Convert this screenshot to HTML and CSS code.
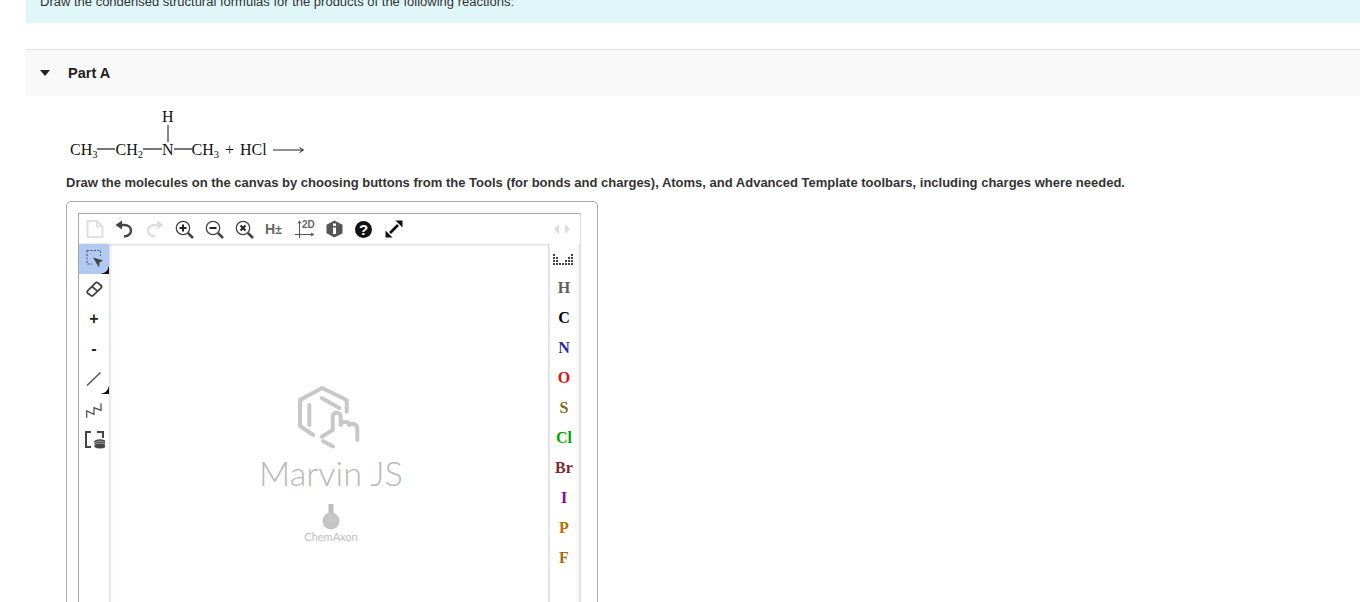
FILE: index.html
```html
<!DOCTYPE html>
<html lang="en">
<head>
<meta charset="utf-8">
<title>Part A</title>
<link rel="stylesheet" href="styles.css">
</head>
<body>
<div class="page">
  <div class="banner"><p class="banner-text">Draw the condensed structural formulas for the products of the following reactions:</p></div>
  <section class="part">
    <header class="part-head"><span class="caret"></span><h2 class="part-title">Part A</h2></header>
    <div class="formula">
      <span>CH<sub>3</sub></span><span class="bond"></span><span>CH<sub>2</sub></span><span class="bond bond-n"></span>
      <span class="stack"><span>H</span><span class="vbond"></span><span>N</span></span>
      <span class="bond"></span><span>CH<sub>3</sub></span><span class="plus">+</span><span>HCl</span>
      <svg class="arrow" width="31" height="8" viewBox="0 0 31 8"><path d="M0 4H30M26.500 1.500L30.500 4L26.500 6.500" fill="none" stroke="#222" stroke-width="1"/></svg>
    </div>
    <p class="instruction">Draw the molecules on the canvas by choosing buttons from the Tools (for bonds and charges), Atoms, and Advanced Template toolbars, including charges where needed.</p>
    <div class="outer">
      <div class="editor">
        <div class="topbar">
          <svg class="t t-doc" width="18" height="18" viewBox="0 0 18 18"><path d="M1.500 1H11L16.500 6.500V17H1.500ZM11 1V6.500H16.500" fill="none" stroke="#e0e0e0" stroke-width="2"/></svg>
          <svg class="t t-undo" width="18" height="18" viewBox="0 0 18 18"><path d="M4 5H9C13.500 5 16 7.500 16 10.500C16 14 13.500 16 9 16.500" fill="none" stroke="#444" stroke-width="2.400"/><path d="M7 0.500L0.500 5L7 9.500Z" fill="#444"/></svg>
          <svg class="t t-redo" width="18" height="18" viewBox="0 0 18 18"><path d="M14 5H9C4.500 5 2 7.500 2 10.500C2 14 4.500 16 9 16.500" fill="none" stroke="#ddd" stroke-width="2.400"/><path d="M11 0.500L17.500 5L11 9.500Z" fill="#ddd"/></svg>
          <svg class="t t-zoom" width="19" height="19" viewBox="0 0 19 19"><circle cx="8" cy="8" r="6.700" fill="none" stroke="#444" stroke-width="1.300"/><path d="M4.500 8H11.500M8 4.500V11.500" stroke="#222" stroke-width="2"/><path d="M13 13L18 18" stroke="#444" stroke-width="2.500"/></svg>
          <svg class="t t-zoom" width="19" height="19" viewBox="0 0 19 19"><circle cx="8" cy="8" r="6.700" fill="none" stroke="#444" stroke-width="1.300"/><path d="M4.500 8H11.500" stroke="#222" stroke-width="2"/><path d="M13 13L18 18" stroke="#444" stroke-width="2.500"/></svg>
          <svg class="t t-zoom" width="19" height="19" viewBox="0 0 19 19"><circle cx="8" cy="8" r="6.700" fill="none" stroke="#444" stroke-width="1.300"/><path d="M5.500 5.500L10.500 10.500M10.500 5.500L5.500 10.500" stroke="#222" stroke-width="2"/><path d="M13 13L18 18" stroke="#444" stroke-width="2.500"/></svg>
          <span class="t t-h">H<span class="pm">±</span></span>
          <span class="t t-2d"><svg width="19" height="19" viewBox="0 0 19 19"><path d="M4.500 2V18M0 14.500H18M3 3.500L4.500 1L6 3.500M16 13L18.500 14.500L16 16" fill="none" stroke="#555" stroke-width="1"/></svg><span class="two-d">2D</span></span>
          <svg class="t t-info" width="17" height="18" viewBox="0 0 17 18"><path d="M8.500 0.500L16.500 4.800V13.200L8.500 17.500L0.500 13.200V4.800Z" fill="#555"/><rect x="7" y="3.500" width="3" height="2.500" fill="#fff"/><rect x="7" y="7.500" width="3" height="6.500" fill="#fff"/></svg>
          <span class="t t-help">?</span>
          <svg class="t t-exp" width="18" height="18" viewBox="0 0 18 18"><path d="M5 13L13 5" stroke="#111" stroke-width="2.600"/><path d="M10.500 0.500H17.500V7.500ZM0.500 10.500V17.500H7.500Z" fill="#111"/></svg>
          <svg class="t-scroll" width="18" height="10" viewBox="0 0 18 10"><path d="M6 0V10L1 5ZM12 0V10L17 5Z" fill="#ddd"/></svg>
        </div>
        <div class="body-row">
          <div class="leftbar">
            <div class="lb lb-sel corner">
              <svg width="20" height="20" viewBox="0 0 20 20"><path d="M3 1.500H16.500V7M3 1.500V15H8" fill="none" stroke="#444" stroke-width=".9" stroke-dasharray="2 1.500"/><path d="M9 8.500L19 11.500L15.500 13.500L15 18.500Z" fill="#444"/></svg>
            </div>
            <div class="lb"><svg width="17" height="16" viewBox="0 0 20 19"><path d="M2 11.500L11 2.500C12 1.500 13.500 1.500 14.500 2.500L17.500 5C18.500 6 18.500 7.500 17.500 8.500L8.500 17C7.500 18 6.500 18 5.500 17L2 14.500C1 13.500 1 12.500 2 11.500ZM7 6.500L13.500 12" fill="none" stroke="#444" stroke-width="2.200"/></svg></div>
            <div class="lb lb-charge">+</div>
            <div class="lb lb-charge">-</div>
            <div class="lb corner"><svg width="18" height="18" viewBox="0 0 18 18"><path d="M2 15.500L15.500 2.500" stroke="#555" stroke-width="1.500"/></svg></div>
            <div class="lb"><svg class="chain" width="18" height="18" viewBox="0 0 18 18"><path d="M1.700 16.700V10L9 13.300V6.700L16 9.300V2.300" fill="none" stroke="#444" stroke-width="1.200"/></svg></div>
            <div class="lb"><svg width="22" height="20" viewBox="0 0 22 20"><path d="M8 3H3V18H8M14 3H20V9" fill="none" stroke="#444" stroke-width="2"/><ellipse cx="17" cy="13" rx="6" ry="2.800" fill="#444"/><ellipse cx="17" cy="15" rx="6" ry="2.800" fill="#444" stroke="#fff" stroke-width=".5"/><ellipse cx="17" cy="17" rx="6" ry="2.800" fill="#444" stroke="#fff" stroke-width=".5"/></svg></div>
          </div>
          <div class="canvas">
            <svg class="logo" width="65" height="65" viewBox="0 0 65 65" fill="none" stroke="#c8c8c8" stroke-width="4" stroke-linejoin="round" stroke-linecap="round">
              <path d="M49.700 26.700V15L25 3L3 15V41L16.300 50M36 61.500L26 56"/>
              <path d="M12.300 20V40M24.700 13L42.300 23"/>
              <path d="M24.700 51.700L35.700 45V31.700C35.700 26.500 43.700 26.500 43.700 31.700V40M43.700 40C44 36 52 36 52.300 40M52.300 40C53 37.500 60.300 38.500 60.300 44V55"/>
            </svg>
            <div class="marvin">Marvin JS</div>
            <svg class="flask" width="18" height="26" viewBox="0 0 18 26"><rect x="6.500" y="0" width="5" height="10" fill="#bdbdbd"/><circle cx="9" cy="17" r="8.500" fill="#c4c4c4"/><circle cx="9" cy="17" r="5" fill="none" stroke="#dcdcdc" stroke-width="1" stroke-dasharray="1 2"/><circle cx="9" cy="17" r="2" fill="none" stroke="#dcdcdc" stroke-width="1" stroke-dasharray="1 1.500"/></svg>
            <div class="chemaxon">ChemAxon</div>
          </div>
          <div class="rightbar">
            <svg class="pt" width="22" height="14" viewBox="0 0 22 14" fill="#444"><path d="M0 1h2v2H0zM0 4h2v2H0zM0 7h2v2H0zM0 10h2v2H0zM3 4h2v2H3zM3 7h2v2H3zM3 10h2v2H3zM6 10h2v2H6zM9 10h2v2H9zM12 7h2v2h-2zM12 10h2v2h-2zM15 4h2v2h-2zM15 7h2v2h-2zM15 10h2v2h-2zM18 1h2v2h-2zM18 4h2v2h-2zM18 7h2v2h-2zM18 10h2v2h-2z"/></svg>
            <div class="atom a-h">H</div>
            <div class="atom a-c">C</div>
            <div class="atom a-n">N</div>
            <div class="atom a-o">O</div>
            <div class="atom a-s">S</div>
            <div class="atom a-cl">Cl</div>
            <div class="atom a-br">Br</div>
            <div class="atom a-i">I</div>
            <div class="atom a-p">P</div>
            <div class="atom a-f">F</div>
          </div>
        </div>
      </div>
    </div>
  </section>
</div>
</body>
</html>
```

FILE: styles.css
```css
html, body { margin: 0; padding: 0; background: #fff; }
.page {
  height: 602px;
  overflow: hidden;
  padding-left: 26px;
  font-family: "Liberation Sans", Arial, sans-serif;
  color: #222;
}
.banner { height: 23px; background: #e0f7fa; overflow: hidden; }
.banner-text { margin: -7px 0 0 14px; font-size: 13px; line-height: 18px; color: #333; }
.part { margin-top: 26px; }
.part-head {
  display: flex;
  align-items: center;
  height: 46px;
  border-top: 1px solid #e2e2e2;
  background: #f9f9f9;
  padding-left: 14px;
}
.caret {
  width: 0; height: 0;
  border-left: 5.500px solid transparent;
  border-right: 5.500px solid transparent;
  border-top: 6px solid #222;
  margin-right: 17px;
}
.part-title { margin: 0 0 0 1px; font-size: 14.500px; line-height: 16px; font-weight: bold; }
.formula {
  display: flex;
  align-items: flex-end;
  margin: 12px 0 0 44px;
  height: 50px;
  font-family: "Liberation Serif", "Times New Roman", serif;
  font-size: 16px;
  line-height: 16px;
  color: #111;
}
.formula sub { font-size: 10.500px; line-height: 0; vertical-align: -3px; }
.bond { width: 18px; height: 1.500px; background: #777; margin: 0 0 8.500px 0; }
.bond-n { width: 19px; }
.stack { display: flex; flex-direction: column; align-items: center; }
.vbond { width: 1.500px; height: 17px; background: #888; }
.plus { margin: 0 6px 0 6px; }
.arrow { margin: 0 0 4px 6px; }
.instruction { margin: 17px 0 0 40px; font-size: 13px; line-height: 16px; font-weight: bold; color: #333; }
.outer {
  box-sizing: border-box;
  margin: 10px 0 0 40px;
  width: 532px;
  height: 420px;
  border: 1px solid #aaa;
  border-radius: 5px;
  padding: 11px 16px 0 11px;
}
.editor { border: 1px solid #aaa; border-right-color: #ddd; height: 400px; }
.topbar { display: flex; align-items: center; height: 30px; padding-left: 7px; }
.t { flex: none; display: block; }
.t-doc { margin-right: 11px; }
.t-undo { margin-right: 13px; }
.t-redo { margin-right: 11px; }
.t-zoom { margin-right: 11px; }
.t-h { margin-right: 11px; width: 19px; font-size: 14px; font-weight: bold; color: #666; white-space: nowrap; }
.pm { font-size: 12px; }
.t-2d { position: relative; width: 19px; height: 19px; margin-right: 12px; }
.two-d { position: absolute; left: 7px; top: 0; font-size: 10px; line-height: 10px; font-weight: bold; color: #666; }
.t-info { margin-right: 12px; }
.t-help {
  width: 17px; height: 17px; margin-right: 13px;
  border-radius: 50%;
  background: #111; color: #fff;
  font-size: 15px; line-height: 17px; font-weight: bold; text-align: center;
}
.t-scroll { margin-left: 150px; }
.body-row { display: flex; height: 360px; }
.leftbar { flex: none; width: 30px; box-shadow: 1px 0 3px rgba(0,0,0,.18); }
.lb { position: relative; height: 30px; display: flex; align-items: center; justify-content: center; }
.lb-sel { background: #b0c9f0; }
.chain { margin-top: 2px; }
.corner::after {
  content: "";
  position: absolute;
  right: 0; bottom: 0;
  width: 9px; height: 9px;
  background: radial-gradient(circle at 0 0, transparent 8.500px, #111 9px);
}
.lb-charge { font-size: 16px; line-height: 16px; font-weight: bold; color: #222; }
.canvas {
  flex: none;
  width: 438px;
  margin-left: 1px;
  display: flex;
  flex-direction: column;
  align-items: center;
  padding: 141px 0 0 4px;
  box-sizing: border-box;
  box-shadow: inset 0 3px 3px -2px rgba(0,0,0,.18);
}
.logo { display: block; margin: 0 3px 2px 0; }
.marvin { font-family: Lato, "Open Sans", sans-serif; font-weight: 300; font-size: 34.300px; line-height: 42px; color: #b8b8b8; }
.flask { display: block; margin-top: 10px; }
.chemaxon { font-family: Lato, "Open Sans", sans-serif; font-size: 11px; line-height: 14px; color: #c0c0c0; }
.rightbar {
  flex: none;
  width: 32px;
  display: flex;
  flex-direction: column;
  align-items: center;
  box-shadow: inset 3px 0 3px -2px rgba(0,0,0,.2), inset -3px 0 3px -2px rgba(0,0,0,.15);
  font-family: "Liberation Serif", "Times New Roman", serif;
}
.pt { display: block; margin: 9px 0 6px; }
.atom { height: 30px; line-height: 30px; font-size: 16px; font-weight: bold; }
.a-h { color: #606060; }
.a-c { color: #000; }
.a-n { color: #2a2aa8; }
.a-o { color: #e01010; }
.a-s { color: #70700c; }
.a-cl { color: #00a800; }
.a-br { color: #7a2c2c; }
.a-i { color: #7d0aa0; }
.a-p { color: #b87000; }
.a-f { color: #a86a10; }
```
